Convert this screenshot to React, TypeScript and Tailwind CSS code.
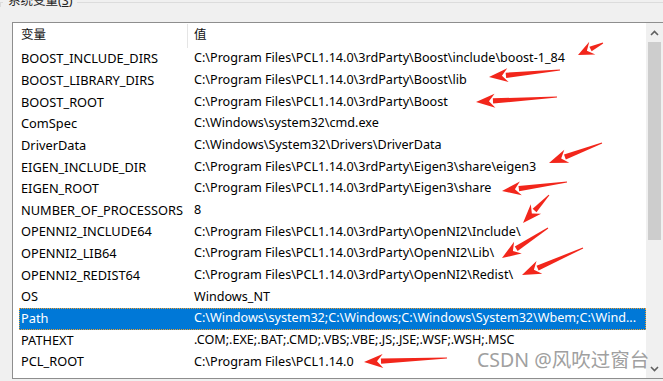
const rows: [string, string][] = [
  ["BOOST_INCLUDE_DIRS", "C:\\Program Files\\PCL1.14.0\\3rdParty\\Boost\\include\\boost-1_84"],
  ["BOOST_LIBRARY_DIRS", "C:\\Program Files\\PCL1.14.0\\3rdParty\\Boost\\lib"],
  ["BOOST_ROOT", "C:\\Program Files\\PCL1.14.0\\3rdParty\\Boost"],
  ["ComSpec", "C:\\Windows\\system32\\cmd.exe"],
  ["DriverData", "C:\\Windows\\System32\\Drivers\\DriverData"],
  ["EIGEN_INCLUDE_DIR", "C:\\Program Files\\PCL1.14.0\\3rdParty\\Eigen3\\share\\eigen3"],
  ["EIGEN_ROOT", "C:\\Program Files\\PCL1.14.0\\3rdParty\\Eigen3\\share"],
  ["NUMBER_OF_PROCESSORS", "8"],
  ["OPENNI2_INCLUDE64", "C:\\Program Files\\PCL1.14.0\\3rdParty\\OpenNI2\\Include\\"],
  ["OPENNI2_LIB64", "C:\\Program Files\\PCL1.14.0\\3rdParty\\OpenNI2\\Lib\\"],
  ["OPENNI2_REDIST64", "C:\\Program Files\\PCL1.14.0\\3rdParty\\OpenNI2\\Redist\\"],
  ["OS", "Windows_NT"],
  ["Path", "C:\\Windows\\system32;C:\\Windows;C:\\Windows\\System32\\Wbem;C:\\Wind..."],
  ["PATHEXT", ".COM;.EXE;.BAT;.CMD;.VBS;.VBE;.JS;.JSE;.WSF;.WSH;.MSC"],
  ["PCL_ROOT", "C:\\Program Files\\PCL1.14.0"],
];

// hand-drawn red arrows: [tailX, tailY, headX, headY]
const arrows: [number, number, number, number][] = [
  [603, 43, 578, 55],
  [560, 70, 489, 77],
  [557, 97, 476, 102],
  [602, 143, 549, 163],
  [567, 182, 502, 191],
  [549, 195, 523, 223],
  [548, 228, 502, 258],
  [583, 248, 522, 275],
  [447, 358, 364, 362],
];

function Arrow({ a }: { a: [number, number, number, number] }) {
  const [tx, ty, hx, hy] = a;
  const dx = hx - tx;
  const dy = hy - ty;
  const len = Math.hypot(dx, dy);
  const ux = dx / len;
  const uy = dy / len;
  const nx = -uy;
  const ny = ux;
  const headLen = Math.min(17, len * 0.5);
  const bx = hx - ux * headLen;
  const by = hy - uy * headLen;
  const shaft = [
    [tx + nx * 0.5, ty + ny * 0.5],
    [bx + nx * 2.6, by + ny * 2.6],
    [bx - nx * 2.6, by - ny * 2.6],
    [tx - nx * 0.5, ty - ny * 0.5],
  ];
  const head = [
    [hx, hy],
    [bx - ux * 2 + nx * 7, by - uy * 2 + ny * 7],
    [bx + ux * 4, by + uy * 4],
    [bx - ux * 2 - nx * 7, by - uy * 2 - ny * 7],
  ];
  const pts = (p: number[][]) => p.map((q) => q.join(",")).join(" ");
  return (
    <>
      <polygon points={pts(shaft)} fill="#f2261b" />
      <polygon points={pts(head)} fill="#f2261b" />
    </>
  );
}

export default function App() {
  return (
    <div
      className="relative w-[663px] h-[381px] overflow-hidden bg-[#f0f0f0] text-[12px] text-black"
      style={{ fontFamily: '"Noto Sans", "Noto Sans CJK SC", sans-serif' }}
    >
      {/* group box header */}
      <div className="flex items-center h-[8px] mt-[-1px]">
        <div className="w-[3px] h-[5px] self-end border-l border-t border-[#dcdcdc]" />
        <span className="px-[5px] leading-[13px] mt-[-5px] text-[12.5px] text-[#222]">
          系统变量(<span className="underline">S</span>)
        </span>
        <div className="flex-1 h-[5px] self-end border-t border-[#dcdcdc]" />
      </div>

      {/* list box */}
      <div className="ml-[12px] mt-[15px] w-[680px] h-[357px] border border-[#8e8e8e] bg-white flex">
        <div className="w-[633px] shrink-0 pl-[6px]">
          <div className="flex h-[25px] items-center">
            <div className="w-[168px] pl-[2px] text-[12.5px] text-[#111]">变量</div>
            <div className="w-px h-[24px] bg-[#e5e5e5]" />
            <div className="pl-[6px] text-[12.5px] text-[#111]">值</div>
          </div>
          {rows.map(([name, value]) => {
            const sel = name === "Path";
            return (
              <div
                key={name}
                className={
                  sel
                    ? "flex items-center h-[21.67px] bg-[#0078d7] text-white outline-1 outline-dotted outline-[#f0a030] -outline-offset-1"
                    : "flex items-center h-[21.67px]"
                }
              >
                <div className="w-[169px] shrink-0 pl-[2px] whitespace-nowrap text-[12.8px]">{name}</div>
                <div className="pl-[6px] whitespace-nowrap text-[12.6px]">{value}</div>
              </div>
            );
          })}
        </div>
        {/* scrollbar */}
        <div className="w-[17px] shrink-0 bg-[#f0f0f0] flex flex-col items-center">
          <div className="h-[19px] flex items-center justify-center w-full">
            <svg width="9" height="6" viewBox="0 0 9 6">
              <path d="M1 5 L4.5 1.5 L8 5" stroke="#606060" strokeWidth="1.6" fill="none" />
            </svg>
          </div>
          <div className="w-[13px] h-[198px] bg-[#cdcdcd]" />
          <div className="flex-1" />
          <div className="h-[19px] flex items-center justify-center w-full">
            <svg width="9" height="6" viewBox="0 0 9 6">
              <path d="M1 1 L4.5 4.5 L8 1" stroke="#606060" strokeWidth="1.6" fill="none" />
            </svg>
          </div>
        </div>
      </div>

      {/* annotations */}
      <svg className="absolute left-0 top-0" width="663" height="381">
        {arrows.map((a, i) => (
          <Arrow key={i} a={a} />
        ))}
      </svg>
      <div
        className="absolute left-[477px] top-[347px] text-[19.5px] leading-[25px] text-[#a0a0a0] whitespace-nowrap"
        style={{ textShadow: "0 0 2px #fff" }}
      >
        CSDN @风吹过窗台
      </div>
    </div>
  );
}
